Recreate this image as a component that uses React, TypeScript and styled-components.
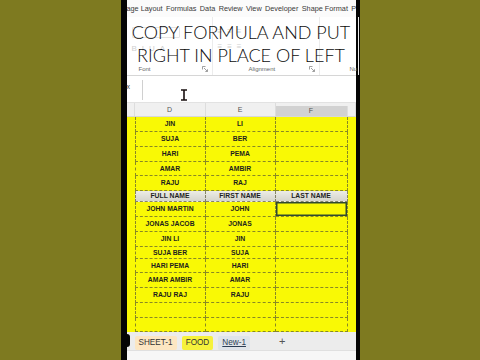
import React from 'react';
import styled, { createGlobalStyle } from 'styled-components';

const Global = createGlobalStyle`
  html, body { margin: 0; padding: 0; }
  body { background: #7e7a20; font-family: "Liberation Sans", Arial, sans-serif; }
`;

const Page = styled.div`
  width: 480px;
  height: 360px;
  background: #7e7a20;
  display: flex;
  justify-content: center;
  overflow: hidden;
`;

const Frame = styled.div`
  width: 229px;
  height: 360px;
  border-left: 6px solid #050505;
  border-right: 4px solid #050505;
  background: #ffffff;
  display: flex;
  flex-direction: column;
  position: relative;
`;

const RibbonTabs = styled.div`
  height: 17px;
  display: flex;
  align-items: center;
  gap: 3.4px;
  white-space: nowrap;
  overflow: hidden;
  font-size: 7.3px;
  color: #3a3a3a;
  background: #fbfbfb;
`;

const RibbonBody = styled.div`
  height: 59px;
  border-bottom: 1px solid #d6d6d6;
  display: flex;
  background: #ffffff;
`;

const Group = styled.div<{ $w: number }>`
  width: ${(p) => p.$w}px;
  flex-shrink: 0;
  display: flex;
  flex-direction: column;
  border-right: 1px solid #ececec;
`;

const Controls = styled.div`
  flex: 1;
  padding: 10px 0 0 5px;
  display: flex;
  flex-direction: column;
  gap: 6px;
`;

const FaintBox = styled.div<{ $w: number }>`
  width: ${(p) => p.$w}px;
  height: 9px;
  border: 1px solid #e4e4e4;
  border-radius: 1px;
`;

const FaintRow = styled.div`
  display: flex;
  gap: 5px;
  align-items: center;
  color: #cfcfcf;
  font-size: 8px;
`;

const GroupLabel = styled.div<{ $pad: number }>`
  height: 12px;
  display: flex;
  align-items: center;
  justify-content: space-between;
  padding: 0 4px 0 ${(p) => p.$pad}px;
  font-size: 6px;
  color: #666;
`;

const Launcher = styled.svg`
  width: 6px;
  height: 6px;
`;

const Title = styled.div`
  position: absolute;
  top: 21px;
  left: 0;
  right: 0;
  text-align: center;
  font-family: Lato, "Open Sans", sans-serif;
  font-weight: 300;
  font-size: 18px;
  line-height: 23px;
  color: #0c0c0c;
  white-space: nowrap;
`;

const FormulaBar = styled.div`
  height: 26px;
  display: flex;
  align-items: stretch;
  background: #fff;
  border-bottom: 1px solid #e2e2e2;
`;

const NameEdge = styled.div`
  width: 15px;
  border-right: 1px solid #d0d0d0;
  margin: 4px 0 2px;
  font-size: 7px;
  color: #444;
  padding-top: 3px;
`;

const CursorWrap = styled.div`
  padding: 11px 0 0 37px;
`;

const Grid = styled.div`
  display: flex;
  flex-direction: column;
  background: #f9f905;
`;

const Row = styled.div<{ $h: number }>`
  height: ${(p) => p.$h}px;
  display: grid;
  grid-template-columns: 8px 71px 70px 72px 1fr;
`;

const HeadRow = styled(Row)`
  background: #f0f0f0;
  border-bottom: 1px solid #d8d8d8;
`;

const HeadCell = styled.div<{ $sel?: boolean }>`
  display: flex;
  align-items: center;
  justify-content: center;
  font-size: 7px;
  color: #555;
  background: ${(p) => (p.$sel ? '#d2d2d2' : 'transparent')};
  border-right: 1px solid #dddddd;
  margin-top: ${(p) => (p.$sel ? '3px' : '0')};
`;

const Edge = styled.div``;

const line = '1px dashed rgba(90, 90, 50, 0.7)';

const Cell = styled.div<{ $first?: boolean; $title?: boolean; $sel?: boolean }>`
  display: flex;
  align-items: center;
  justify-content: center;
  font-size: 6.8px;
  font-weight: 700;
  color: #1e1e1e;
  border-bottom: ${line};
  border-right: ${line};
  border-left: ${(p) => (p.$first ? line : 'none')};
  background: ${(p) => (p.$title ? 'linear-gradient(#ecece6, #d5d5cc)' : 'transparent')};
  box-shadow: ${(p) => (p.$sel ? 'inset 0 0 0 1.5px #2f4a30' : 'none')};
  white-space: nowrap;
`;

const TabBar = styled.div`
  height: 19px;
  margin-top: auto;
  background: #ececec;
  display: flex;
  align-items: center;
  font-size: 8.2px;
  color: #333;
`;

const NavBlob = styled.div`
  width: 3px;
  height: 13px;
  background: #050505;
  border-radius: 0 3px 3px 0;
  margin-right: 5px;
`;

const Tab = styled.div<{ $bg: string; $active?: boolean }>`
  height: 14px;
  margin-top: 4px;
  padding: 0 4px;
  display: flex;
  align-items: center;
  background: ${(p) => p.$bg};
  border-radius: 2px;
  margin-right: 5px;
  text-decoration: ${(p) => (p.$active ? 'underline' : 'none')};
  color: ${(p) => (p.$active ? '#2c3e55' : '#333')};
`;

const Plus = styled.div`
  margin-left: 24px;
  font-size: 11px;
  color: #555;
`;

const StatusStrip = styled.div`
  height: 9px;
  background: #f7f7f7;
  border-top: 1px solid #e0e0e0;
`;

const ribbonTabs = ['age Layout', 'Formulas', 'Data', 'Review', 'View', 'Developer', 'Shape Format', 'Pi'];

const topRows: [string, string, number][] = [
  ['JIN', 'LI', 15],
  ['SUJA', 'BER', 15],
  ['HARI', 'PEMA', 15],
  ['AMAR', 'AMBIR', 14],
  ['RAJU', 'RAJ', 15],
];

const nameRows: [string, string, number][] = [
  ['JOHN MARTIN', 'JOHN', 15],
  ['JONAS JACOB', 'JONAS', 15],
  ['JIN LI', 'JIN', 15],
  ['SUJA BER', 'SUJA', 12],
  ['HARI PEMA', 'HARI', 14],
  ['AMAR AMBIR', 'AMAR', 15],
  ['RAJU RAJ', 'RAJU', 15],
  ['', '', 15],
  ['', '', 14],
];

const LaunchIcon = () => (
  <Launcher viewBox="0 0 6 6">
    <path d="M0.5 0.5h3M0.5 0.5v3M2 2l3.2 3.2M5.5 3.3v2.2H3.3" stroke="#777" strokeWidth="0.7" fill="none" />
  </Launcher>
);

const IBeam = () => (
  <svg width="8" height="12" viewBox="0 0 8 12">
    <path d="M1 1h6M4 1v10M1 11h6" stroke="#1a1010" strokeWidth="1.6" fill="none" />
  </svg>
);

export default function App() {
  return (
    <Page>
      <Global />
      <Frame>
        <RibbonTabs>
          {ribbonTabs.map((t) => (
            <span key={t}>{t}</span>
          ))}
        </RibbonTabs>
        <RibbonBody>
          <Group $w={85}>
            <Controls>
              <FaintBox $w={46} />
              <FaintRow>
                <span>B</span>
                <span>I</span>
                <span>U</span>
                <span>A</span>
              </FaintRow>
            </Controls>
            <GroupLabel $pad={12}>
              <span>Font</span>
              <LaunchIcon />
            </GroupLabel>
          </Group>
          <Group $w={106}>
            <Controls>
              <FaintRow>
                <span>≡</span>
                <span>≡</span>
                <span>≡</span>
              </FaintRow>
              <FaintRow>
                <span>≡</span>
                <span>≡</span>
                <span>≡</span>
              </FaintRow>
            </Controls>
            <GroupLabel $pad={36}>
              <span>Alignment</span>
              <LaunchIcon />
            </GroupLabel>
          </Group>
          <Group $w={38}>
            <Controls />
            <GroupLabel $pad={30}>
              <span>Nu</span>
            </GroupLabel>
          </Group>
        </RibbonBody>
        <Title>
          COPY FORMULA AND PUT
          <br />
          RIGHT IN PLACE OF LEFT
        </Title>
        <FormulaBar>
          <NameEdge>x</NameEdge>
          <CursorWrap>
            <IBeam />
          </CursorWrap>
        </FormulaBar>
        <Grid>
          <HeadRow $h={13}>
            <HeadCell />
            <HeadCell>D</HeadCell>
            <HeadCell>E</HeadCell>
            <HeadCell $sel>F</HeadCell>
            <HeadCell />
          </HeadRow>
          {topRows.map(([a, b, h]) => (
            <Row key={a} $h={h}>
              <Edge />
              <Cell $first>{a}</Cell>
              <Cell>{b}</Cell>
              <Cell />
              <Edge />
            </Row>
          ))}
          <Row $h={11}>
            <Edge />
            <Cell $first $title>FULL NAME</Cell>
            <Cell $title>FIRST NAME</Cell>
            <Cell $title>LAST NAME</Cell>
            <Edge />
          </Row>
          {nameRows.map(([a, b, h], i) => (
            <Row key={i} $h={h}>
              <Edge />
              <Cell $first>{a}</Cell>
              <Cell>{b}</Cell>
              <Cell $sel={i === 0} />
              <Edge />
            </Row>
          ))}
        </Grid>
        <TabBar>
          <NavBlob />
          <Tab $bg="#fce6c2">SHEET-1</Tab>
          <Tab $bg="#f6f23c">FOOD</Tab>
          <Tab $bg="#dfe4ea" $active>
            New-1
          </Tab>
          <Plus>+</Plus>
        </TabBar>
        <StatusStrip />
      </Frame>
    </Page>
  );
}
